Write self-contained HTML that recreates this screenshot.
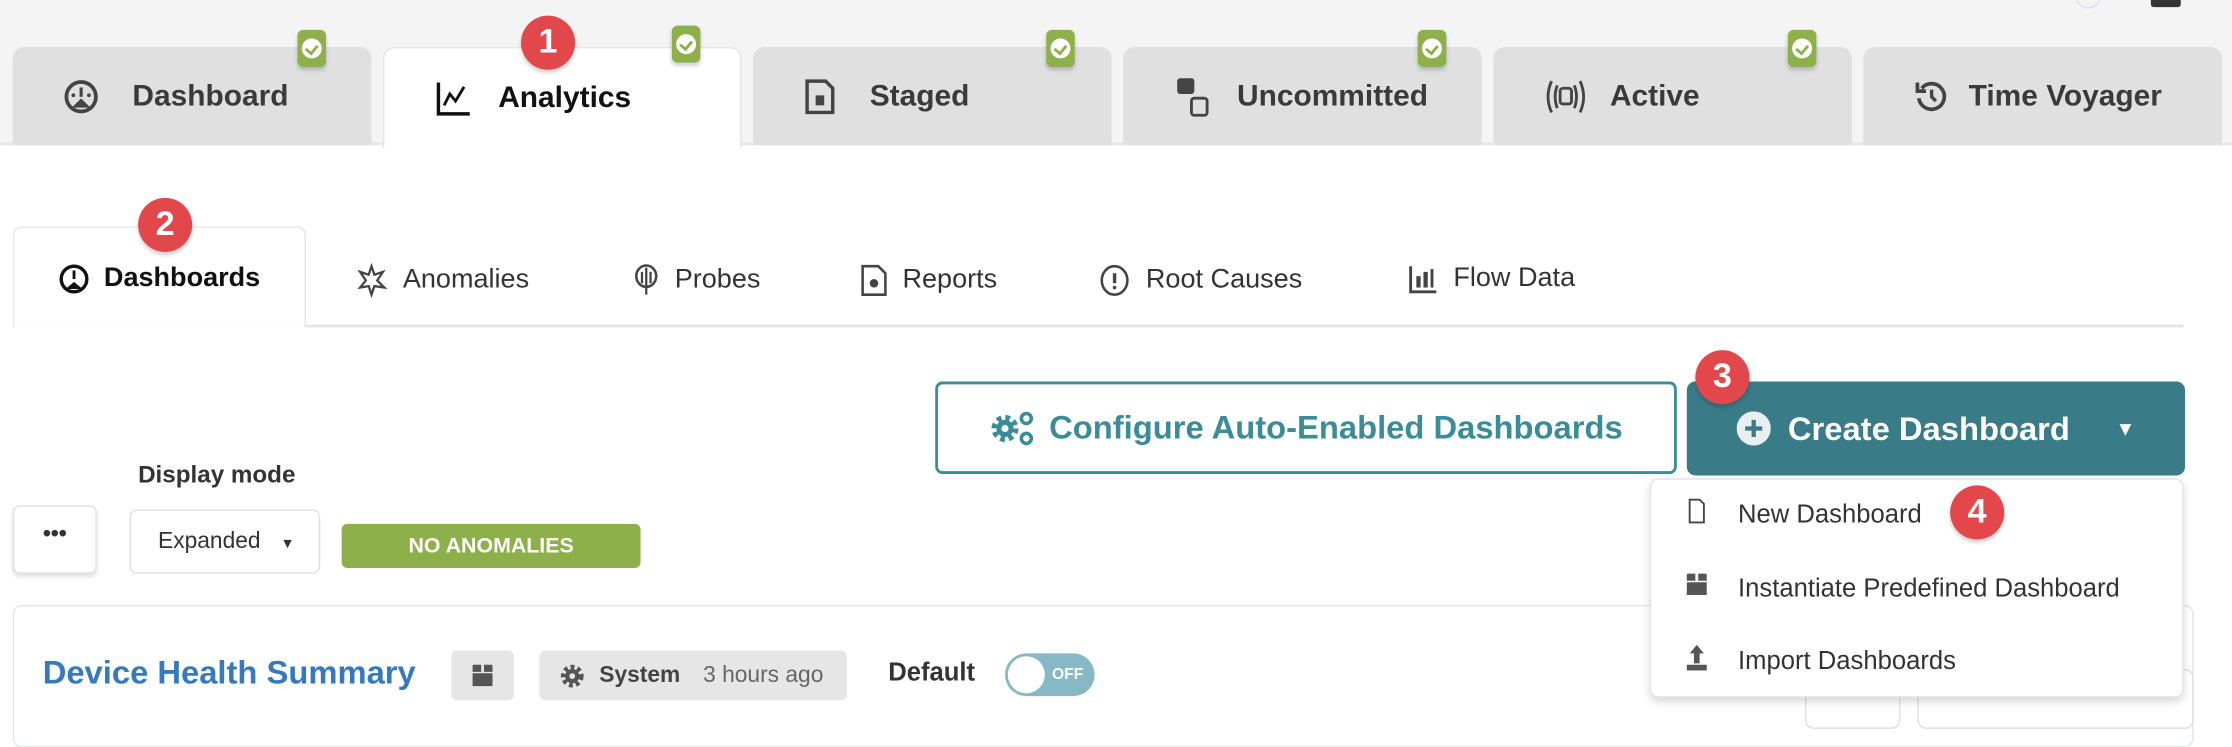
<!DOCTYPE html>
<html><head><meta charset="utf-8">
<style>
*{box-sizing:border-box;margin:0;padding:0}
html,body{width:2232px;height:728px;overflow:hidden;background:#fff}
#s{position:absolute;left:0;top:0;width:1568px;height:511px;transform:scale(1.42347);transform-origin:0 0;font-family:"Liberation Sans",sans-serif;color:#333}
.a{position:absolute}
.top{left:0;top:0;width:1568px;height:102px;background:#f4f4f4;border-bottom:2px solid #e4e7eb}
.tab{top:33px;width:252px;height:69px;background:#e0e0e0;border-radius:8px 8px 0 0;font-size:21px;font-weight:bold;color:#3a3a3a;display:flex;align-items:center;padding-left:36px;gap:12px}
.tab.act{background:#fff;border:1px solid #e2e5ea;border-bottom:none;height:71px;color:#111}
.ok{width:20px;height:26px;background:#8db04a;border-radius:4px;box-shadow:0 2px 3px rgba(0,0,0,.2)}
.ok::after{content:"";position:absolute;left:3px;top:6px;width:14px;height:14px;border-radius:50%;background:#fff}
.ok::before{content:"";position:absolute;left:7px;top:9px;width:4px;height:6px;border:solid #8db04a;border-width:0 2px 2px 0;transform:rotate(40deg);z-index:2}
.red{width:38px;height:38px;border-radius:50%;background:#e2474c;color:#fff;font-weight:bold;font-size:24px;display:flex;align-items:center;justify-content:center;box-shadow:0 2px 3px rgba(0,0,0,.2);z-index:5}
.sub{top:185px;font-size:19px;color:#333;display:flex;align-items:center;gap:10px}
</style></head><body><div id="s">
<div class="a top"></div>
<div class="a tab" style="left:9px"><svg width="24" height="24" viewBox="0 0 22 22"><circle cx="11" cy="11" r="9.5" fill="none" stroke="#444" stroke-width="2.4"/><path d="M5 18 L11 12 L17 18Z" fill="#444"/><circle cx="6" cy="10" r="1.2" fill="#444"/><circle cx="16" cy="10" r="1.2" fill="#444"/><rect x="10" y="5" width="2" height="6" fill="#444"/></svg><span style="margin-left:12px">Dashboard</span></div>
<div class="a tab act" style="left:269px"><svg width="26" height="26" viewBox="0 0 26 26"><path d="M2 2V24H24" fill="none" stroke="#111" stroke-width="2.4"/><path d="M6 18L10 10L14 15L20 5" fill="none" stroke="#111" stroke-width="2"/></svg><span style="margin-left:6px">Analytics</span></div>
<div class="a tab" style="left:529px"><svg width="22" height="26" viewBox="0 0 22 26"><path d="M2 2H15L20 7V24H2Z" fill="none" stroke="#444" stroke-width="2.4"/><rect x="8" y="12" width="6" height="7" fill="#444"/></svg><span style="margin-left:12px">Staged</span></div>
<div class="a tab" style="left:789px"><svg width="26" height="28" viewBox="0 0 26 28"><rect x="2" y="1" width="12" height="11" rx="2" fill="#444"/><rect x="12" y="15" width="11" height="12" rx="2" fill="none" stroke="#444" stroke-width="2"/></svg><span style="margin-left:6px">Uncommitted</span></div>
<div class="a tab" style="left:1049px"><svg width="30" height="26" viewBox="0 0 30 26"><path d="M5 2Q0 13 5 24M9 5Q6 13 9 21M25 2Q30 13 25 24M21 5Q24 13 21 21" fill="none" stroke="#444" stroke-width="2"/><rect x="11" y="7" width="8" height="11" rx="2" fill="none" stroke="#444" stroke-width="2"/></svg><span style="margin-left:4px">Active</span></div>
<div class="a tab" style="left:1309px"><svg width="24" height="24" viewBox="0 0 24 24"><path d="M5 6A9 9 0 1 1 3 13" fill="none" stroke="#444" stroke-width="2.6"/><path d="M2 2V8H8" fill="none" stroke="#444" stroke-width="2.6"/><path d="M12 7V12L15 15" fill="none" stroke="#444" stroke-width="2.4"/></svg><span style="margin-left:2px">Time Voyager</span></div>
<div class="a ok" style="left:209px;top:21px"></div>
<div class="a ok" style="left:472px;top:18px"></div>
<div class="a ok" style="left:735px;top:21px"></div>
<div class="a ok" style="left:996px;top:21px"></div>
<div class="a ok" style="left:1256px;top:21px"></div>
<div class="a red" style="left:366px;top:11px">1</div>
<div class="a" style="left:1458px;top:-12px;width:18px;height:18px;border-radius:50%;border:1px solid #dde"></div>
<div class="a" style="left:1511px;top:-4px;width:21px;height:9px;border-radius:2px;background:#333"></div>

<div class="a" style="left:9px;top:228px;width:1525px;height:2px;background:#e2e5ea"></div>
<div class="a" style="left:9px;top:159px;width:206px;height:71px;background:#fff;border:1px solid #e2e5ea;border-bottom:none;border-radius:6px 6px 0 0"></div>
<div class="a red" style="left:97px;top:139px">2</div>
<div class="a sub" style="left:41px;font-weight:bold;color:#111"><svg width="22" height="22" viewBox="0 0 22 22"><circle cx="11" cy="11" r="9" fill="none" stroke="#111" stroke-width="2.4"/><path d="M5 18L11 13L17 18Z" fill="#111"/><rect x="10" y="5" width="2" height="6" fill="#111"/></svg>Dashboards</div>
<div class="a sub" style="left:249px"><svg width="24" height="24" viewBox="0 0 24 24"><path d="M12 2L14 8L20 6L16 12L21 17L14 16L12 22L10 16L4 17L8 12L4 6L10 8Z" fill="none" stroke="#444" stroke-width="1.6"/></svg>Anomalies</div>
<div class="a sub" style="left:444px"><svg width="20" height="24" viewBox="0 0 20 24"><ellipse cx="10" cy="9" rx="7" ry="7.5" fill="none" stroke="#444" stroke-width="1.8"/><path d="M10 3V22M7 6V14M13 6V14" stroke="#444" stroke-width="1.6"/></svg>Probes</div>
<div class="a sub" style="left:604px"><svg width="20" height="24" viewBox="0 0 20 24"><path d="M2 2H13L18 7V22H2Z" fill="none" stroke="#444" stroke-width="1.8"/><circle cx="10" cy="14" r="3" fill="#444"/></svg>Reports</div>
<div class="a sub" style="left:771px"><svg width="24" height="24" viewBox="0 0 24 24"><path d="M12 2A9 10 0 1 0 12 22A9 10 0 1 0 12 2" fill="none" stroke="#444" stroke-width="1.8"/><path d="M12 7V14" stroke="#444" stroke-width="2.4"/><circle cx="12" cy="17" r="1.3" fill="#444"/></svg>Root Causes</div>
<div class="a sub" style="left:989px"><svg width="22" height="22" viewBox="0 0 22 22"><path d="M2 2V20H20" fill="none" stroke="#444" stroke-width="2"/><rect x="6" y="9" width="3" height="8" fill="#444"/><rect x="11" y="6" width="3" height="11" fill="#444"/><rect x="16" y="4" width="2" height="13" fill="#444"/></svg>Flow Data</div>

<div class="a" style="left:657px;top:268px;width:521px;height:65px;border:2px solid #3e8c97;border-radius:5px;color:#3a8d98;font-size:23px;font-weight:bold;display:flex;align-items:center;justify-content:center;gap:8px"><svg width="34" height="26" viewBox="0 0 34 26"><circle cx="11" cy="13" r="7" fill="none" stroke="#3a8d98" stroke-width="5" stroke-dasharray="3 2.5"/><circle cx="11" cy="13" r="6" fill="#3a8d98"/><circle cx="11" cy="13" r="2.5" fill="#fff"/><circle cx="26" cy="6" r="3.5" fill="none" stroke="#3a8d98" stroke-width="2.5"/><circle cx="26" cy="20" r="3.5" fill="none" stroke="#3a8d98" stroke-width="2.5"/></svg>Configure Auto-Enabled Dashboards</div>
<div class="a" style="left:1185px;top:268px;width:350px;height:66px;background:#397c87;border-radius:6px;color:#fff;font-size:23px;font-weight:bold;display:flex;align-items:center;padding-left:35px;gap:12px"><svg width="24" height="24" viewBox="0 0 24 24"><circle cx="12" cy="12" r="12" fill="#e8eff0"/><path d="M12 6V18M6 12H18" stroke="#397c87" stroke-width="3"/></svg>Create Dashboard<span style="font-size:14px;margin-left:20px">▼</span></div>
<div class="a red" style="left:1191px;top:246px">3</div>

<div class="a" style="left:97px;top:324px;font-size:17px;font-weight:bold;color:#333">Display mode</div>
<div class="a" style="left:9px;top:355px;width:59px;height:48px;border:1px solid #dde0e5;border-radius:5px;box-shadow:0 2px 3px rgba(0,0,0,.12);text-align:center;line-height:40px;font-weight:bold;font-size:16px">•••</div>
<div class="a" style="left:91px;top:358px;width:134px;height:45px;border:1px solid #dde0e5;border-radius:5px;font-size:16px;line-height:43px;padding-left:19px">Expanded<span style="font-size:10px;margin-left:14px">▼</span></div>
<div class="a" style="left:240px;top:368px;width:210px;height:31px;background:#8db04a;border-radius:4px;color:#fff;font-weight:bold;font-size:15px;text-align:center;line-height:31px">NO ANOMALIES</div>

<div class="a" style="left:9px;top:425px;width:1532px;height:100px;border:1px solid #e2e5ea;border-radius:6px"></div>
<div class="a" style="left:30px;top:459px;font-size:23px;font-weight:bold;color:#3579bf">Device Health Summary</div>
<div class="a" style="left:317px;top:457px;width:44px;height:35px;background:#e6e6e6;border-radius:4px"><svg class="a" style="left:14px;top:9px" width="16" height="17" viewBox="0 0 16 17"><path d="M1 2Q1 1 2 1H7V6H1ZM9 1H14Q15 1 15 2V6H9ZM1 7H15V16H1Z" fill="#555"/></svg></div>
<div class="a" style="left:379px;top:457px;width:216px;height:35px;background:#e6e6e6;border-radius:4px;font-size:16px;line-height:35px;padding-left:14px;color:#444;display:flex;gap:10px;align-items:center"><svg width="18" height="18" viewBox="0 0 18 18"><circle cx="9" cy="9" r="6" fill="none" stroke="#555" stroke-width="4" stroke-dasharray="2.5 2"/><circle cx="9" cy="9" r="5" fill="#555"/><circle cx="9" cy="9" r="2" fill="#e6e6e6"/></svg><b style="font-weight:bold">System</b><span style="color:#666;margin-left:6px">3 hours ago</span></div>
<div class="a" style="left:624px;top:462px;font-size:18px;font-weight:bold;color:#333">Default</div>
<div class="a" style="left:706px;top:459px;width:63px;height:30px;border-radius:15px;background:#86b8c5"><div class="a" style="left:2px;top:2px;width:26px;height:26px;border-radius:50%;background:#fff"></div><span class="a" style="left:33px;top:9px;font-size:11px;font-weight:bold;color:#fff">OFF</span></div>
<div class="a" style="left:1268px;top:470px;width:67px;height:42px;border:1px solid #dde0e5;border-radius:6px"></div>
<div class="a" style="left:1347px;top:470px;width:194px;height:42px;border:1px solid #dde0e5;border-radius:6px"></div>

<div class="a" style="left:1159px;top:336px;width:375px;height:154px;background:#fff;border:1px solid #e2e5ea;border-radius:6px;box-shadow:0 3px 6px rgba(0,0,0,.15);font-size:18px;color:#333">
<div class="a" style="left:26px;top:13px"><svg width="12" height="18" viewBox="0 0 12 18"><path d="M1 1H8L11 4V17H1Z" fill="none" stroke="#444" stroke-width="1.3"/></svg></div>
<div class="a" style="left:61px;top:14px">New Dashboard</div>
<div class="a" style="left:24px;top:65px"><svg width="16" height="17" viewBox="0 0 16 17"><path d="M1 2Q1 1 2 1H7V6H1ZM9 1H14Q15 1 15 2V6H9ZM1 7H15V16H1Z" fill="#555"/></svg></div>
<div class="a" style="left:61px;top:66px">Instantiate Predefined Dashboard</div>
<div class="a" style="left:24px;top:115px"><svg width="16" height="20" viewBox="0 0 16 20"><path d="M8 1L3 7H6V14H10V7H13Z" fill="#555"/><rect x="1" y="15" width="14" height="4" fill="#555"/></svg></div>
<div class="a" style="left:61px;top:117px">Import Dashboards</div>
</div>
<div class="a red" style="left:1370px;top:341px">4</div>
</div></body></html>
